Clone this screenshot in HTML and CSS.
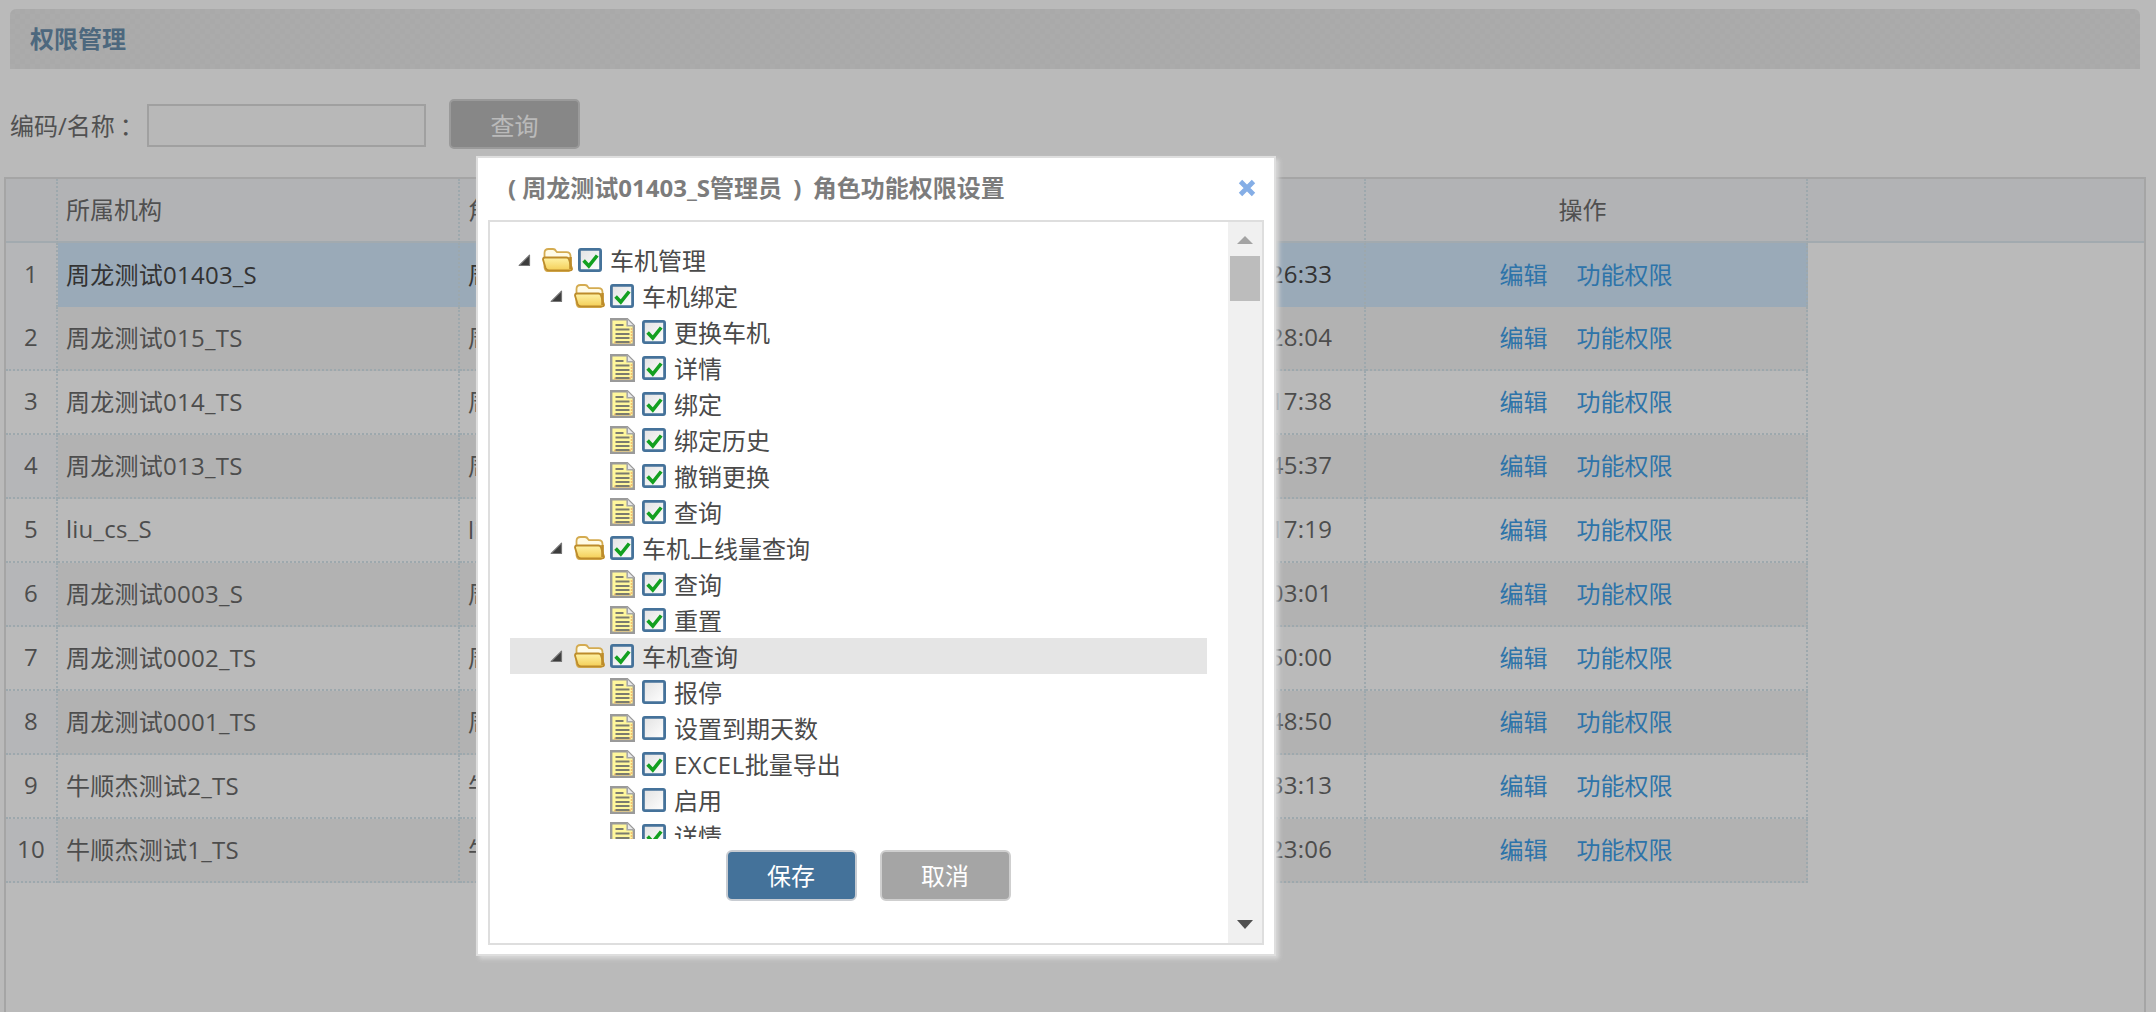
FILE: index.html
```html
<!DOCTYPE html>
<html lang="zh-CN">
<head>
<meta charset="utf-8">
<title>权限管理</title>
<link rel="stylesheet" href="styles.css">
</head>
<body>
<svg class="defs" aria-hidden="true">
  <defs>
    <linearGradient id="foldFill" x1="0" y1="0" x2="0" y2="1"><stop offset="0" stop-color="#fff3a6"/><stop offset="1" stop-color="#f4cf58"/></linearGradient>
    <linearGradient id="boxFill" x1="0" y1="0" x2="1" y2="1"><stop offset="0" stop-color="#e2e2e2"/><stop offset="1" stop-color="#ffffff"/></linearGradient>
    <symbol id="tri" viewBox="0 0 13 13"><path d="M11.5 1.2V11.5H1.2z" fill="#3c3c3c" stroke="#777" stroke-width="1.2" stroke-linejoin="round"/></symbol>
    <symbol id="folder" viewBox="0 0 31 24">
      <path d="M2.500 12V5q0-4 4-4h4.500q2 0 3 2l1 1.200h9.500q4 0 4 4v12q0 3-3 3H6q-3 0-3.500-4z" fill="#fffbe6" stroke="#d4ab50" stroke-width="1.800"/>
      <path d="M1 11.500q0-2 2-2h21.500q1.800 0 2.400 1.800l3 9q.5 2-1.500 2H7q-2.500 0-3.500-2.500z" fill="url(#foldFill)" stroke="#bd8c2a" stroke-width="1.800"/>
      <path d="M28.500 9v12" stroke="#bd8c2a" stroke-width="2.600"/>
    </symbol>
    <symbol id="doc" viewBox="0 0 25 28">
      <path d="M1.200 1.200h16l6.600 6.600v19H1.200z" fill="#fff79c" stroke="#9a9a9a" stroke-width="2.400"/>
      <path d="M17.200 1.200v6.600h6.600" fill="#e8e8e8" stroke="#a8a8a8" stroke-width="1.600"/>
      <path d="M4 24.500h17M21.600 10v14" stroke="#f2bf74" stroke-width="1.800" stroke-dasharray="2 1"/>
      <path d="M5.500 7h8M5.500 11.500h14M5.500 16h14M5.500 20h14M5.500 24h14" stroke="#7c7c6e" stroke-width="1.800"/>
    </symbol>
    <symbol id="unchecked" viewBox="0 0 24 24">
      <rect x="1.400" y="1.400" width="21.200" height="21.200" rx="1.500" fill="url(#boxFill)" stroke="#45729a" stroke-width="2.800"/>
    </symbol>
    <symbol id="checked" viewBox="0 0 24 24">
      <rect x="1.400" y="1.400" width="21.200" height="21.200" rx="1.500" fill="url(#boxFill)" stroke="#45729a" stroke-width="2.800"/>
      <path d="M5.600 12.500l5.200 5.500 8.400-10.500" fill="none" stroke="#13a020" stroke-width="3.600"/>
    </symbol>
  </defs>
</svg>

<div class="page">
  <div class="title-bar">权限管理</div>
  <div class="search">
    <label class="search-label">编码/名称<span class="colon">：</span></label>
    <input class="search-input" type="text">
    <button class="search-btn" type="button">查询</button>
  </div>
  <div class="grid-wrap">
    <table class="grid">
      <colgroup>
        <col class="c-idx"><col class="c-org"><col class="c-role"><col class="c-desc"><col class="c-time"><col class="c-op"><col class="c-fill">
      </colgroup>
      <thead>
        <tr><th class="idx"></th><th>所属机构</th><th>角色名称</th><th>角色描述</th><th>创建时间</th><th class="center">操作</th><th class="fill"></th></tr>
      </thead>
      <tbody>
        <tr class="sel"><td class="idx">1</td><td>周龙测试01403_S</td><td>周龙测试01403_S管理员</td><td></td><td>2020-01-14 09:26:33</td><td class="center"><a class="lnk">编辑</a><a class="lnk">功能权限</a></td><td class="fill"></td></tr>
        <tr><td class="idx">2</td><td>周龙测试015_TS</td><td>周龙测试015_TS管理员</td><td></td><td>2020-01-10 15:28:04</td><td class="center"><a class="lnk">编辑</a><a class="lnk">功能权限</a></td><td class="fill"></td></tr>
        <tr><td class="idx">3</td><td>周龙测试014_TS</td><td>周龙测试014_TS管理员</td><td></td><td>2020-01-10 15:17:38</td><td class="center"><a class="lnk">编辑</a><a class="lnk">功能权限</a></td><td class="fill"></td></tr>
        <tr><td class="idx">4</td><td>周龙测试013_TS</td><td>周龙测试013_TS管理员</td><td></td><td>2020-01-10 14:45:37</td><td class="center"><a class="lnk">编辑</a><a class="lnk">功能权限</a></td><td class="fill"></td></tr>
        <tr><td class="idx">5</td><td>liu_cs_S</td><td>liu_cs_S管理员</td><td></td><td>2020-01-09 11:17:19</td><td class="center"><a class="lnk">编辑</a><a class="lnk">功能权限</a></td><td class="fill"></td></tr>
        <tr><td class="idx">6</td><td>周龙测试0003_S</td><td>周龙测试0003_S管理员</td><td></td><td>2020-01-08 10:03:01</td><td class="center"><a class="lnk">编辑</a><a class="lnk">功能权限</a></td><td class="fill"></td></tr>
        <tr><td class="idx">7</td><td>周龙测试0002_TS</td><td>周龙测试0002_TS管理员</td><td></td><td>2020-01-07 16:50:00</td><td class="center"><a class="lnk">编辑</a><a class="lnk">功能权限</a></td><td class="fill"></td></tr>
        <tr><td class="idx">8</td><td>周龙测试0001_TS</td><td>周龙测试0001_TS管理员</td><td></td><td>2020-01-07 15:48:50</td><td class="center"><a class="lnk">编辑</a><a class="lnk">功能权限</a></td><td class="fill"></td></tr>
        <tr><td class="idx">9</td><td>牛顺杰测试2_TS</td><td>牛顺杰测试2_TS管理员</td><td></td><td>2020-01-06 11:33:13</td><td class="center"><a class="lnk">编辑</a><a class="lnk">功能权限</a></td><td class="fill"></td></tr>
        <tr><td class="idx">10</td><td>牛顺杰测试1_TS</td><td>牛顺杰测试1_TS管理员</td><td></td><td>2020-01-06 11:23:06</td><td class="center"><a class="lnk">编辑</a><a class="lnk">功能权限</a></td><td class="fill"></td></tr>
      </tbody>
    </table>
  </div>
</div>

<div class="mask"></div>

<div class="modal">
  <div class="modal-head">
    <span class="modal-title">( 周龙测试01403_S管理员<span class="title-rest"> ) 角色功能权限设置</span></span>
    <svg class="modal-close" viewBox="0 0 18 18"><path d="M2.500 2.500l13 13M15.500 2.500l-13 13" stroke="#85aee6" stroke-width="4.800" fill="none"/></svg>
  </div>
  <div class="modal-box">
    <div class="modal-content">
      <div class="tree">
        <div class="row l1"><svg class="tri"><use href="#tri"/></svg><svg class="folder"><use href="#folder"/></svg><svg class="cb"><use href="#checked"/></svg><span>车机管理</span></div>
        <div class="row l2"><svg class="tri"><use href="#tri"/></svg><svg class="folder"><use href="#folder"/></svg><svg class="cb"><use href="#checked"/></svg><span>车机绑定</span></div>
        <div class="row l3"><svg class="doc"><use href="#doc"/></svg><svg class="cb"><use href="#checked"/></svg><span>更换车机</span></div>
        <div class="row l3"><svg class="doc"><use href="#doc"/></svg><svg class="cb"><use href="#checked"/></svg><span>详情</span></div>
        <div class="row l3"><svg class="doc"><use href="#doc"/></svg><svg class="cb"><use href="#checked"/></svg><span>绑定</span></div>
        <div class="row l3"><svg class="doc"><use href="#doc"/></svg><svg class="cb"><use href="#checked"/></svg><span>绑定历史</span></div>
        <div class="row l3"><svg class="doc"><use href="#doc"/></svg><svg class="cb"><use href="#checked"/></svg><span>撤销更换</span></div>
        <div class="row l3"><svg class="doc"><use href="#doc"/></svg><svg class="cb"><use href="#checked"/></svg><span>查询</span></div>
        <div class="row l2"><svg class="tri"><use href="#tri"/></svg><svg class="folder"><use href="#folder"/></svg><svg class="cb"><use href="#checked"/></svg><span>车机上线量查询</span></div>
        <div class="row l3"><svg class="doc"><use href="#doc"/></svg><svg class="cb"><use href="#checked"/></svg><span>查询</span></div>
        <div class="row l3"><svg class="doc"><use href="#doc"/></svg><svg class="cb"><use href="#checked"/></svg><span>重置</span></div>
        <div class="row l2 hover"><svg class="tri"><use href="#tri"/></svg><svg class="folder"><use href="#folder"/></svg><svg class="cb"><use href="#checked"/></svg><span>车机查询</span></div>
        <div class="row l3"><svg class="doc"><use href="#doc"/></svg><svg class="cb"><use href="#unchecked"/></svg><span>报停</span></div>
        <div class="row l3"><svg class="doc"><use href="#doc"/></svg><svg class="cb"><use href="#unchecked"/></svg><span>设置到期天数</span></div>
        <div class="row l3"><svg class="doc"><use href="#doc"/></svg><svg class="cb"><use href="#checked"/></svg><span><span class="latin">EXCEL</span>批量导出</span></div>
        <div class="row l3"><svg class="doc"><use href="#doc"/></svg><svg class="cb"><use href="#unchecked"/></svg><span>启用</span></div>
        <div class="row l3"><svg class="doc"><use href="#doc"/></svg><svg class="cb"><use href="#checked"/></svg><span>详情</span></div>
      </div>
      <div class="actions">
        <button class="btn btn-save" type="button">保存</button>
        <button class="btn btn-cancel" type="button">取消</button>
      </div>
    </div>
    <div class="scrollbar">
      <span class="arrow-up"></span>
      <span class="thumb"></span>
      <span class="arrow-down"></span>
    </div>
  </div>
</div>
</body>
</html>
```

FILE: styles.css
```css
* { box-sizing: border-box; }
html, body { margin: 0; height: 100%; }
body {
  position: relative;
  overflow: hidden;
  background: #fff;
  color: #6a6a6a;
  font-family: "Open Sans", "Noto Sans CJK SC", sans-serif;
  font-size: 24px;
}
.defs { position: absolute; width: 0; height: 0; }

.page { height: 1012px; display: flex; flex-direction: column; padding-top: 9px; }

.title-bar {
  height: 60px;
  margin: 0 16px 0 10px;
  padding: 0 0 3px 20px;
  display: flex;
  align-items: center;
  font-weight: 700;
  color: #6a8fad;
  border-radius: 6px 6px 0 0;
  background: repeating-conic-gradient(#ebebeb 0 25%, #e8e8e8 0 50%) 0 0 / 10px 10px;
}

.search { height: 50px; margin-top: 30px; display: flex; align-items: center; padding-left: 10px; }
.search-label { width: 137px; color: #707070; white-space: nowrap; }
.colon { font-family: "Noto Sans CJK TC", sans-serif; margin-left: 5px; }
.search-input { width: 279px; height: 43px; margin-top: 3px; border: 2px solid #dcdcdc; background: #fcfdfc; }
.search-btn {
  width: 131px;
  height: 50px;
  margin-left: 23px;
  border: 2px solid #d4d4d4;
  border-radius: 5px;
  background: #b9b9b9;
  color: #fff;
  font: inherit;
}

.grid-wrap {
  flex: 1;
  margin: 28px 10px 0 4px;
  border: 2px solid #e2e2e2;
  border-bottom: 0;
  min-height: 0;
}
.grid { width: 100%; table-layout: fixed; border-collapse: separate; border-spacing: 0; }
.c-idx { width: 52px; }
.c-org { width: 402px; }
.c-role { width: 336px; }
.c-desc { width: 297px; }
.c-time { width: 273px; }
.c-op { width: 442px; }
.c-fill { width: 336px; }

.grid th, .grid td {
  height: 64px;
  padding: 0 0 3px 8px;
  text-align: left;
  font-weight: 400;
  white-space: nowrap;
  overflow: hidden;
  border-right: 2px dotted #d8e6ee;
}
.grid th {
  background: #f5f6f9;
  border-bottom: 2px solid #dfe9f0;
  color: #6e6e6e;
}
.grid td { border-bottom: 2px dotted #d8e6ee; background: #fff; letter-spacing: 0.25px; }
.grid tbody tr:nth-child(even) td { background: #f5f5f5; }
.grid tbody tr:nth-child(odd) td { background: #fff; }
.grid tbody tr.sel td { background: #d3e9fd; color: #464646; border-bottom: 0; }
.grid tbody td.idx, .grid tbody tr.sel td.idx, .grid tbody tr:nth-child(even) td.idx {
  padding: 0 0 3px;
  text-align: center;
  background: #f9fafc;
  color: #6a6a6a;
}
.grid th.idx { padding: 0; }
.grid .center { padding: 0 0 3px; text-align: center; letter-spacing: 0; }
.grid th.center { padding-right: 7px; }
.grid th.fill { border-right: 0; }
.grid tbody td.fill, .grid tbody tr:nth-child(even) td.fill, .grid tbody tr:nth-child(odd) td.fill, .grid tbody tr.sel td.fill { background: none; border: 0; }
.lnk { color: #3f9fe8; }
.lnk + .lnk { margin-left: 29px; }

.mask { position: absolute; inset: 0; background: rgba(0, 0, 0, 0.27); }

.modal {
  position: absolute;
  left: 476px;
  top: 156px;
  width: 800px;
  height: 800px;
  padding: 0 10px 9px 10px;
  display: flex;
  flex-direction: column;
  background: #fff;
  border: 2px solid #dedede;
  box-shadow: 3px 3px 4px #d6d6d6;
  color: #4a4a4a;
}
.modal-head { height: 62px; display: flex; align-items: center; justify-content: space-between; padding: 0 8px 5px 20px; }
.modal-title { font-weight: 700; color: #7c7c7c; }
.title-rest { word-spacing: 5px; }
.modal-close { width: 18px; height: 18px; margin-top: 3px; }

.modal-box { flex: 1; min-height: 0; display: flex; border: 2px solid #dedede; }
.modal-content { flex: 1; min-width: 0; display: flex; flex-direction: column; }

.tree { height: 617px; overflow: hidden; padding: 20px 21px 0 20px; }
.row { height: 36px; display: flex; align-items: center; white-space: nowrap; }
.row > span { padding-bottom: 2px; }
.latin { letter-spacing: 0.5px; }
.row.hover { background: #e5e5e5; }
.l1 { padding-left: 8px; }
.l2 { padding-left: 40px; }
.l3 { padding-left: 100px; }
.tri { width: 13px; height: 13px; margin-right: 11px; }
.folder { width: 31px; height: 24px; margin-right: 5px; }
.doc { width: 25px; height: 28px; margin-right: 7px; }
.cb { width: 24px; height: 24px; margin-right: 8px; }

.actions { display: flex; justify-content: center; gap: 23px; padding: 11px 0 0 18px; }
.btn { width: 131px; height: 51px; padding-bottom: 3px; border-radius: 6px; color: #fff; font: inherit; }
.btn-save { background: #44729a; border: 2px solid #c8ccd2; }
.btn-cancel { background: #a5a5a5; border: 2px solid #cfcfcf; }

.scrollbar { width: 34px; position: relative; background: #f0f0f0; display: flex; flex-direction: column; align-items: center; }
.arrow-up { margin-top: 14px; border: 8px solid transparent; border-top: 0; border-bottom: 8px solid #a3a3a3; }
.thumb { width: 30px; height: 45px; margin-top: 12px; background: #bcbcbc; }
.arrow-down { margin-top: auto; margin-bottom: 14px; border: 8px solid transparent; border-bottom: 0; border-top: 9px solid #505050; }
```
